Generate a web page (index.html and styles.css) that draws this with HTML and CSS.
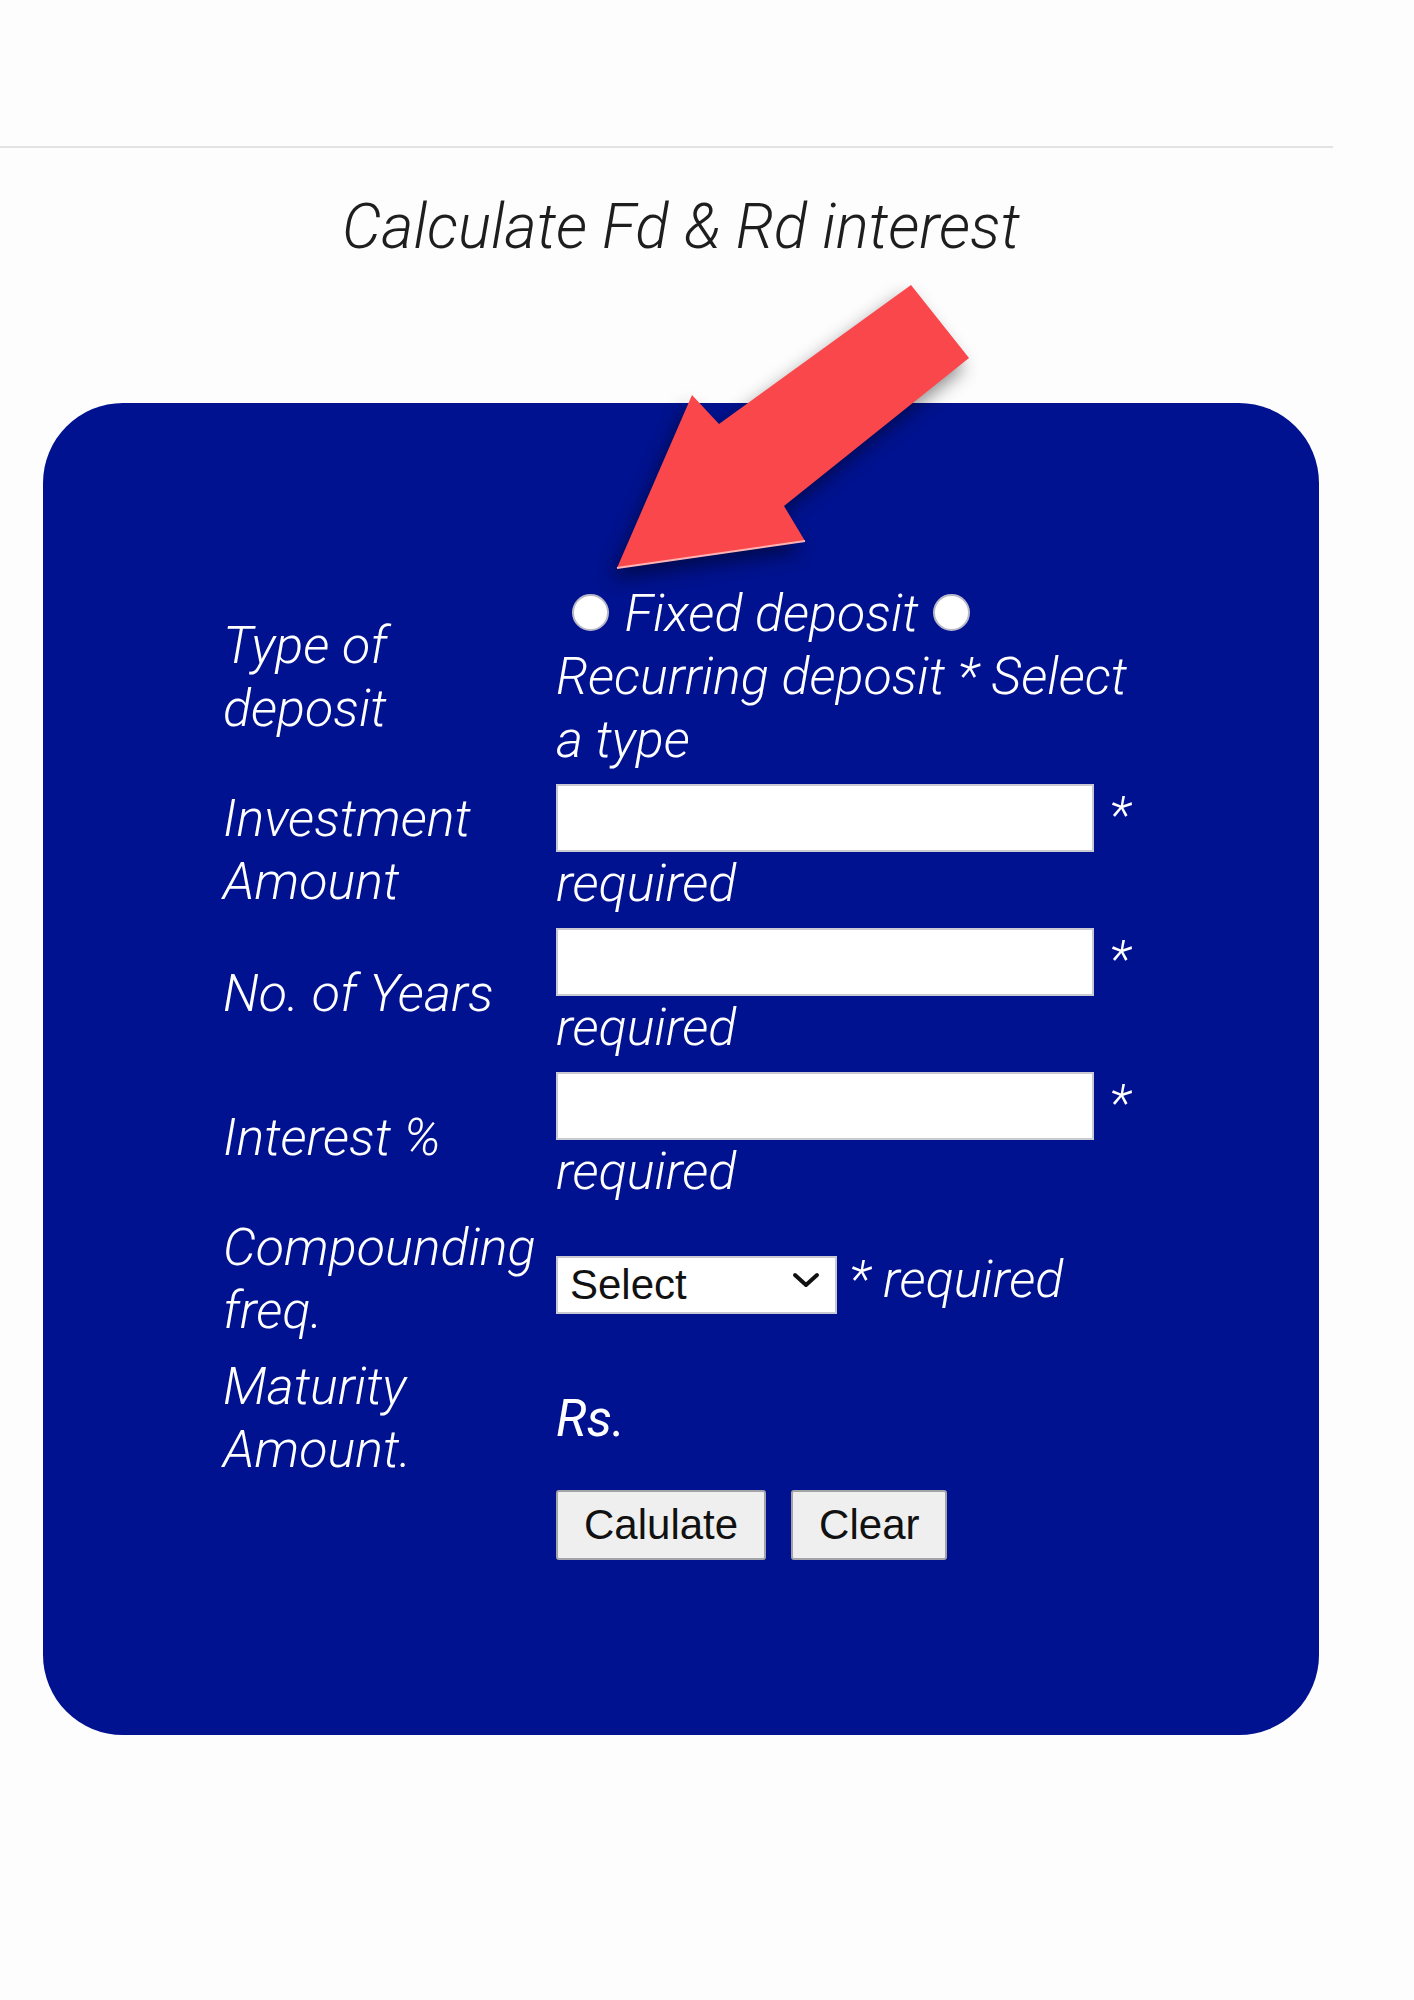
FILE: index.html
```html
<!DOCTYPE html>
<html lang="en">
<head>
<meta charset="utf-8">
<title>Calculate Fd &amp; Rd interest</title>
<link rel="stylesheet" href="styles.css">
</head>
<body>
<div class="page">
  <hr class="rule">
  <h1 class="title">Calculate Fd &amp; Rd interest</h1>
  <div class="card">
    <form class="calc">
      <div class="label">Type of deposit</div>
      <div class="value type"><input type="radio" name="dtype" class="radio first"> Fixed deposit <input type="radio" name="dtype" class="radio"> Recurring deposit * Select a type</div>

      <div class="label">Investment Amount</div>
      <div class="value">
        <div class="field"><input type="text" class="text"><span class="star">*</span></div>
        <div class="req">required</div>
      </div>

      <div class="label">No. of Years</div>
      <div class="value">
        <div class="field"><input type="text" class="text"><span class="star">*</span></div>
        <div class="req">required</div>
      </div>

      <div class="label">Interest %</div>
      <div class="value">
        <div class="field"><input type="text" class="text"><span class="star">*</span></div>
        <div class="req">required</div>
      </div>

      <div class="label">Compounding freq.</div>
      <div class="value inline">
        <span class="select-wrap">
          <select class="select">
            <option>Select</option>
            <option>Monthly</option>
            <option>Quarterly</option>
            <option>Half yearly</option>
            <option>Yearly</option>
          </select>
          <svg class="chev" width="30" height="18" viewBox="0 0 30 18"><path d="M4 4 L15 14 L26 4" fill="none" stroke="#111" stroke-width="4" stroke-linecap="round" stroke-linejoin="round"/></svg>
        </span>
        <span class="req after">* required</span>
      </div>

      <div class="label">Maturity Amount.</div>
      <div class="value"><span class="rs">Rs.</span></div>

      <div class="label"></div>
      <div class="value buttons">
        <button type="button" class="btn">Calulate</button>
        <button type="reset" class="btn">Clear</button>
      </div>
    </form>
  </div>
  <svg class="arrow" width="400" height="330" viewBox="0 0 400 330">
    <polygon points="311,15 369,88 184,236 205,271 17,298 92,125 119,154" fill="#f9474b"/>
    <polyline points="205,271 17,298" fill="none" stroke="#ffb3b3" stroke-width="2"/>
  </svg>
</div>
</body>
</html>
```

FILE: styles.css
```css
html, body {
  margin: 0;
  padding: 0;
  background: #fdfdfd;
}

.page {
  position: relative;
  width: 1414px;
  height: 2000px;
  box-sizing: border-box;
  padding-top: 146px;
  overflow: hidden;
  font-family: Roboto, "Noto Sans", "Liberation Sans", sans-serif;
}

.rule {
  width: 1333px;
  margin: 0;
  height: 0;
  border: 0;
  border-top: 2px solid #e3e3e3;
}

.title {
  width: 1362px;
  margin: 41px 0 0 0;
  text-align: center;
  font-size: 62px;
  line-height: 75px;
  font-weight: 300;
  font-style: italic;
  color: #1e1e1e;
}

.card {
  margin: 139px 0 0 43px;
  width: 1276px;
  height: 1332px;
  box-sizing: border-box;
  padding-top: 179px;
  background: #00128f;
  border-radius: 80px;
}

.calc {
  width: 913px;
  margin-left: 180px;
  display: grid;
  grid-template-columns: 330px 580px;
  column-gap: 3px;
  row-gap: 13px;
  align-items: center;
  color: #ffffff;
  font-size: 52px;
  line-height: 63px;
  font-weight: 300;
  font-style: italic;
}

.label {
  align-self: center;
}

.value.type {
  align-self: start;
}

.radio {
  -webkit-appearance: none;
  appearance: none;
  width: 37px;
  height: 37px;
  margin: 0 3px 0 2px;
  border: 2px solid #b9b9c8;
  border-radius: 50%;
  background: #ffffff;
  box-sizing: border-box;
  vertical-align: baseline;
}

.radio.first {
  margin-left: 16px;
}

.field {
  display: flex;
  align-items: flex-start;
}

.text {
  width: 538px;
  height: 68px;
  box-sizing: border-box;
  margin: 0;
  border: 2px solid #c9c9d4;
  background: #ffffff;
  font-size: 40px;
}

.star {
  margin-left: 15px;
}

.req {
  display: block;
}

.value.inline {
  display: flex;
  align-items: center;
}

.req.after {
  margin-left: 12px;
}

.select-wrap {
  position: relative;
  display: inline-block;
  width: 281px;
  height: 58px;
}

.select {
  -webkit-appearance: none;
  appearance: none;
  width: 281px;
  height: 58px;
  box-sizing: border-box;
  margin: 0;
  padding: 0 0 0 12px;
  border: 2px solid #c9c9d4;
  border-radius: 0;
  background: #ffffff;
  color: #111;
  font-family: "Liberation Sans", Arial, sans-serif;
  font-size: 42px;
  font-style: normal;
  font-weight: 400;
}

.chev {
  position: absolute;
  right: 16px;
  top: 21px;
  pointer-events: none;
}

.rs {
  font-weight: 400;
  font-size: 51px;
}

.buttons {
  display: flex;
  gap: 25px;
  margin-top: -4px;
}

.btn {
  height: 70px;
  box-sizing: border-box;
  margin: 0;
  padding: 0 26px;
  border: 2px solid #a3a3a8;
  border-radius: 3px;
  background: #efefef;
  color: #111;
  font-family: "Liberation Sans", Arial, sans-serif;
  font-size: 42px;
  font-style: normal;
  font-weight: 400;
}

.arrow {
  position: absolute;
  left: 600px;
  top: 270px;
  filter: drop-shadow(-5px 10px 9px rgba(0, 0, 0, 0.45));
}
```
